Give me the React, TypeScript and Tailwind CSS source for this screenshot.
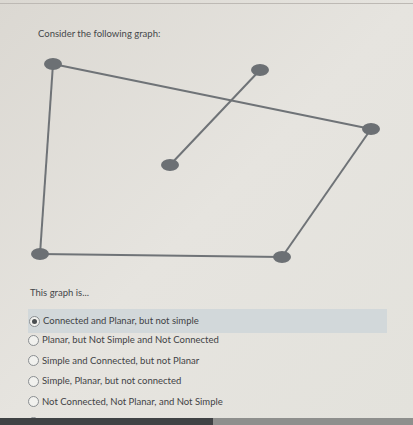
import React from "react";

const nodes = [
    { id: "a", x: 53, y: 64 },
    { id: "b", x: 260, y: 70 },
    { id: "c", x: 371, y: 129 },
    { id: "d", x: 170, y: 165 },
    { id: "e", x: 40, y: 254 },
    { id: "f", x: 282, y: 257 },
];

const edges: [string, string][] = [
    ["a", "e"],
    ["a", "c"],
    ["b", "d"],
    ["c", "f"],
    ["e", "f"],
];

const options = [
    "Connected and Planar, but not simple",
    "Planar, but Not Simple and Not Connected",
    "Simple and Connected, but not Planar",
    "Simple, Planar, but not connected",
    "Not Connected, Not Planar, and Not Simple",
    "Simple, but not Planar or Connected",
];

const OFFSET_Y = 40;

const Graph = () => {
    const pos = (id: string) => nodes.find((n) => n.id === id)!;
    return (
        <svg width="413" height="236" viewBox={`0 ${OFFSET_Y} 413 236`} className="block">
            {edges.map(([from, to]) => {
                const p = pos(from);
                const q = pos(to);
                return (
                    <line key={from + to} x1={p.x} y1={p.y} x2={q.x} y2={q.y} stroke="#6f7377" strokeWidth="2" />
                );
            })}
            {nodes.map((n) => (
                <ellipse key={n.id} cx={n.x} cy={n.y} rx="9" ry="6" fill="#6c7074" />
            ))}
        </svg>
    );
};

export default function App() {
    const selected = 0;
    return (
        <div
            className="relative w-[413px] h-[425px] overflow-hidden bg-gradient-to-br from-[#dbd8d2] via-[#e6e4df] to-[#e3e2dc] text-[#4d4f51]"
            style={{ fontFamily: "Lato, 'Open Sans', sans-serif" }}
        >
            <div className="mt-[3px] h-px bg-[#bdb9b4]" />
            <p className="pl-[38px] pt-[24px] text-[9.5px] leading-[12px] text-[#45474a]">Consider the following graph:</p>
            <Graph />
            <p className="pl-[30px] mt-[11px] text-[9.5px] leading-[12px] text-[#45474a]">This graph is...</p>
            <div className="mt-[10px] ml-[28px] w-[359px] flex flex-col">
                {options.map((opt, i) => (
                    <div
                        key={i}
                        className={
                            i === selected
                                ? "flex items-center gap-[3px] h-[24px] pl-[1px] bg-[#d2d8da] -mb-[3px]"
                                : "flex items-center gap-[3px] h-[20.5px] pl-[0px]"
                        }
                    >
                        <span className="flex items-center justify-center w-[11px] h-[11px] rounded-full border border-[#8a8e91] bg-[#f1f1ee]">
                            {i === selected && <span className="w-[5px] h-[5px] rounded-full bg-[#4a4e51]" />}
                        </span>
                        <span className="text-[9.5px] leading-[12px] text-[#3f4245]">{opt}</span>
                    </div>
                ))}
            </div>
            <div className="absolute bottom-0 left-0 right-0 h-[7px] flex">
                <div className="w-[213px] bg-[#3f4244]" />
                <div className="flex-1 bg-[#8e8f8d]" />
            </div>
        </div>
    );
}
